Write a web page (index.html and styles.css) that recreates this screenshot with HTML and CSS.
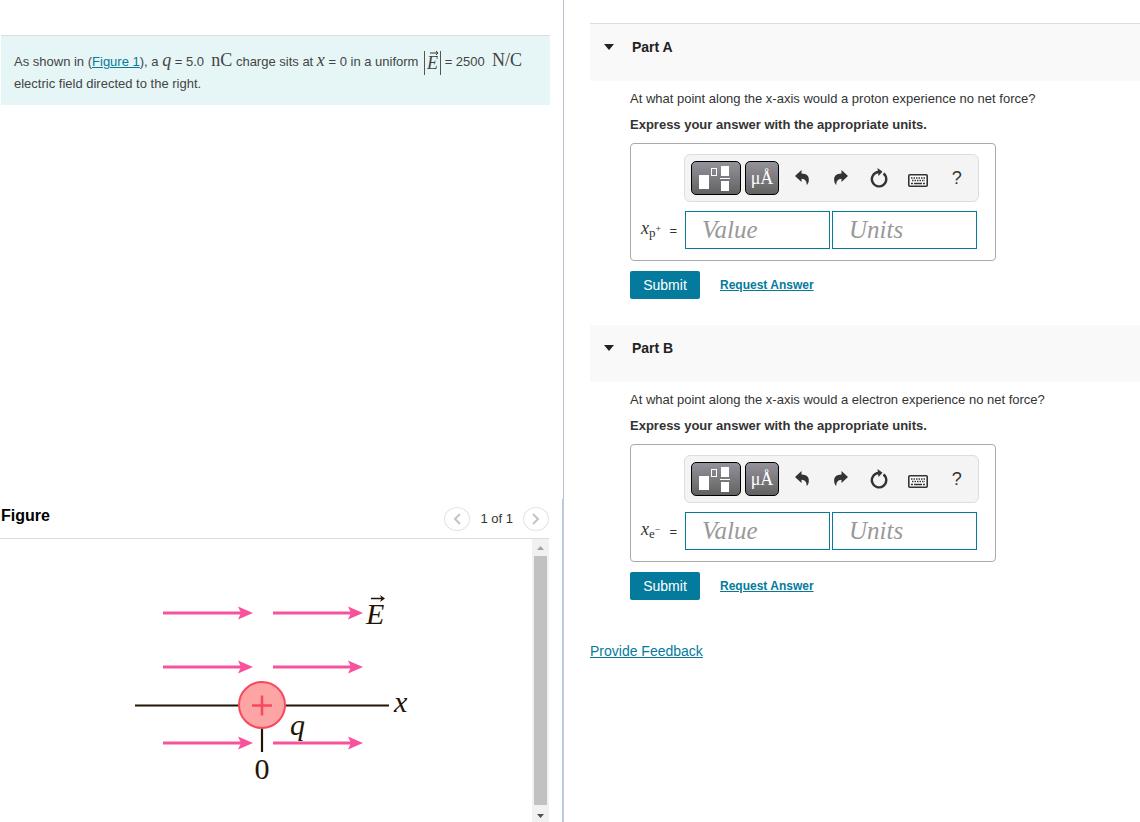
FILE: index.html
```html
<!DOCTYPE html>
<html lang="en">
<head>
    <meta charset="UTF-8">
    <title>Electric field problem</title>
    <link rel="stylesheet" href="styles.css">
</head>
<body>

    <!-- shared icons -->
    <svg class="sprite" aria-hidden="true">
        <symbol id="icon-template" viewBox="0 0 34 25">
            <rect x="0" y="9" width="10" height="14" fill="#fff"/>
            <rect x="12.500" y="2.500" width="5" height="7" fill="none" stroke="#fff"/>
            <rect x="22" y="0" width="8" height="10" fill="#fff"/>
            <rect x="21" y="12" width="10" height="1" fill="#fff"/>
            <rect x="22" y="15" width="8" height="10" fill="#fff"/>
        </symbol>
        <symbol id="icon-undo" viewBox="0 0 16 16">
            <path d="M1 6 7.500 0v3.500c5 .2 7.800 2.300 7.300 7-.1 1.700-.8 3.200-2 4.800C12.800 11.500 11.500 9 7.500 8.800V12z"/>
        </symbol>
        <symbol id="icon-redo" viewBox="0 0 16 16">
            <path d="M15 6 8.500 0v3.500c-5 .2-7.800 2.300-7.300 7 .1 1.700.8 3.200 2 4.800C3.200 11.500 4.500 9 8.500 8.800V12z"/>
        </symbol>
        <symbol id="icon-reset" viewBox="0 0 18 20">
            <path d="M13.500 5.500A7.200 7.200 0 1 1 8.500 4" fill="none" stroke="#333" stroke-width="2.400"/>
            <path d="M7.500 0l5 3.800L8.500 8z"/>
        </symbol>
        <symbol id="icon-keyboard" viewBox="0 0 20 13">
            <rect x=".8" y=".8" width="18.400" height="11.400" rx="1" fill="#fff" stroke="#333" stroke-width="1.600"/>
            <path d="M3 4h14M4 6.500h13" stroke="#333" stroke-width="1.500" stroke-dasharray="1.500 1"/>
            <path d="M3 9.500h2M6 9.500h8M15 9.500h2" stroke="#333" stroke-width="1.500"/>
        </symbol>
    </svg>

    <div class="page">
        <div class="left">
            <div class="problem">
                <div class="intro">
                    As shown in (<a href="#figure">Figure 1</a>), a <i class="math">q</i> = 5.0 &nbsp;<span class="math">nC</span> charge sits at <i class="math">x</i> = 0 in a uniform
                    <span class="abs"><i class="math">E</i><svg class="vec" viewBox="0 0 9 4"><path d="M0 2h8M6 0l2 2-2 2" fill="none" stroke="#333"/></svg></span> = 2500 &nbsp;<span class="math">N/C</span> electric field directed to the right.
                </div>
            </div>

            <div class="figure" id="figure">
                <div class="figure-header">
                    <h2>Figure</h2>
                    <div class="pager">
                        <button class="round" aria-label="Previous figure"><svg width="8" height="12" viewBox="0 0 8 12"><path d="M7 1 2 6l5 5"/></svg></button>
                        <span>1 of 1</span>
                        <button class="round" aria-label="Next figure"><svg width="8" height="12" viewBox="0 0 8 12"><path d="M1 1l5 5-5 5"/></svg></button>
                    </div>
                </div>
                <div class="viewer">
                    <div class="drawing">
                        <svg width="292" height="210" viewBox="0 0 292 210">
                            <defs>
                                <g id="field">
                                    <path d="M0 0h80" stroke="#f9529d" stroke-width="3"/>
                                    <path d="M90 0 75-6.500 78 0 75 6.500z" fill="#f9529d"/>
                                </g>
                            </defs>
                            <use href="#field" x="43" y="33"/>
                            <use href="#field" x="153" y="33"/>
                            <use href="#field" x="43" y="87"/>
                            <use href="#field" x="153" y="87"/>
                            <use href="#field" x="43" y="163"/>
                            <use href="#field" x="153" y="163"/>
                            <path d="M15 125.500h254M142 148v24" stroke="#231405" stroke-width="2.200"/>
                            <circle cx="142" cy="125" r="23" fill="#fda4a4" stroke="#f8485e" stroke-width="2"/>
                            <path d="M132 125.500h20M142 115.500v20" stroke="#f8485e" stroke-width="2.500"/>
                            <path d="M251 18.500h12" stroke="#231405" stroke-width="1.500"/>
                            <path d="M265 18.500l-5-3.500 1.500 3.500-1.500 3.500z" fill="#231405"/>
                            <text class="sym" x="246" y="44">E</text>
                            <text class="sym" x="274" y="132">x</text>
                            <text class="sym" x="170" y="155">q</text>
                            <text class="sym upright" x="142" y="199">0</text>
                        </svg>
                    </div>
                    <div class="scrollbar">
                        <svg width="7" height="4" viewBox="0 0 7 4"><path d="M0 4h7L3.500 0z" fill="#a3a3a3"/></svg>
                        <div class="thumb"></div>
                        <svg width="7" height="4" viewBox="0 0 7 4"><path d="M0 0h7L3.500 4z" fill="#505050"/></svg>
                    </div>
                </div>
            </div>
        </div>

        <div class="right">
            <div class="part first">
                <div class="part-header">
                    <svg width="10" height="6" viewBox="0 0 10 6"><path d="M0 0h10L5 6z" fill="#222"/></svg>
                    <h2>Part A</h2>
                </div>
                <div class="part-body">
                    <p>At what point along the x-axis would a proton experience no net force?</p>
                    <p class="strong">Express your answer with the appropriate units.</p>
                    <div class="answer">
                        <div class="toolbar">
                            <button class="dark wide" aria-label="Templates"><svg width="34" height="25"><use href="#icon-template"/></svg></button>
                            <button class="dark" aria-label="Units">μÅ</button>
                            <div class="tools">
                                <button aria-label="Undo"><svg width="16" height="16"><use href="#icon-undo"/></svg></button>
                                <button aria-label="Redo"><svg width="16" height="16"><use href="#icon-redo"/></svg></button>
                                <button aria-label="Reset"><svg width="18" height="20"><use href="#icon-reset"/></svg></button>
                                <button aria-label="Keyboard"><svg class="keyboard" width="20" height="13"><use href="#icon-keyboard"/></svg></button>
                                <button aria-label="Help">?</button>
                            </div>
                        </div>
                        <div class="fields">
                            <label for="value-a"><span><i class="math">x</i><span class="sub">p<sup>+</sup></span></span> <span>=</span></label>
                            <input type="text" id="value-a" placeholder="Value">
                            <input type="text" aria-label="Units" placeholder="Units">
                        </div>
                    </div>
                    <div class="actions">
                        <button class="submit">Submit</button>
                        <a href="#">Request Answer</a>
                    </div>
                </div>
            </div>

            <div class="part">
                <div class="part-header">
                    <svg width="10" height="6" viewBox="0 0 10 6"><path d="M0 0h10L5 6z" fill="#222"/></svg>
                    <h2>Part B</h2>
                </div>
                <div class="part-body">
                    <p>At what point along the x-axis would a electron experience no net force?</p>
                    <p class="strong">Express your answer with the appropriate units.</p>
                    <div class="answer">
                        <div class="toolbar">
                            <button class="dark wide" aria-label="Templates"><svg width="34" height="25"><use href="#icon-template"/></svg></button>
                            <button class="dark" aria-label="Units">μÅ</button>
                            <div class="tools">
                                <button aria-label="Undo"><svg width="16" height="16"><use href="#icon-undo"/></svg></button>
                                <button aria-label="Redo"><svg width="16" height="16"><use href="#icon-redo"/></svg></button>
                                <button aria-label="Reset"><svg width="18" height="20"><use href="#icon-reset"/></svg></button>
                                <button aria-label="Keyboard"><svg class="keyboard" width="20" height="13"><use href="#icon-keyboard"/></svg></button>
                                <button aria-label="Help">?</button>
                            </div>
                        </div>
                        <div class="fields">
                            <label for="value-b"><span><i class="math">x</i><span class="sub">e<sup>−</sup></span></span> <span>=</span></label>
                            <input type="text" id="value-b" placeholder="Value">
                            <input type="text" aria-label="Units" placeholder="Units">
                        </div>
                    </div>
                    <div class="actions">
                        <button class="submit">Submit</button>
                        <a href="#">Request Answer</a>
                    </div>
                </div>
            </div>

            <a class="feedback" href="#">Provide Feedback</a>
        </div>
    </div>

</body>
</html>
```
FILE: styles.css
```css
* {
    box-sizing: border-box;
}

body {
    margin: 0;
    font-family: "Liberation Sans", Arial, sans-serif;
    font-size: 13px;
    color: #333;
    background: #fff;
}

a {
    color: #047a9c;
}

h2, p {
    margin: 0;
}

button {
    font-family: inherit;
    padding: 0;
    border: 0;
    background: none;
    cursor: pointer;
}

.sprite {
    display: none;
}

.page {
    display: grid;
    grid-template-columns: 564fr 576fr;
    min-height: 100vh;
}

/* left column */
.left {
    display: flex;
    flex-direction: column;
}

.problem {
    flex: 1;
    padding: 35px 13px 0 1px;
    border-right: 1px solid #b9c0cc;
}

.intro {
    padding: 15px 12px 12px 13px;
    line-height: 18px;
    color: #444;
    background: #e6f6f6;
    border-top: 1px solid #ddd;
}

.math {
    font-family: "Liberation Serif", "Times New Roman", serif;
    font-size: 18px;
    line-height: 16px;
}

.abs {
    position: relative;
    display: inline-block;
    height: 24px;
    margin-left: 2px;
    padding: 0 2px;
    line-height: 28px;
    vertical-align: middle;
    border-left: 1px solid #555;
    border-right: 1px solid #555;
}

.vec {
    position: absolute;
    top: 0;
    left: 5px;
    width: 9px;
    height: 4px;
}

.figure {
    display: flex;
    flex-direction: column;
    height: 323px;
    padding-right: 13px;
    border-right: 2px solid #b8cbe0;
}

.figure-header {
    display: flex;
    align-items: center;
    justify-content: space-between;
    height: 40px;
    padding-left: 1px;
    border-bottom: 1px solid #ddd;
}

.figure-header h2 {
    padding-bottom: 6px;
    font-size: 16px;
    color: #000;
}

.pager {
    display: flex;
    align-items: center;
    gap: 10px;
}

.round {
    display: flex;
    align-items: center;
    justify-content: center;
    width: 26px;
    height: 24px;
    border: 1px solid #e3e3e3;
    border-radius: 50%;
}

.round path {
    fill: none;
    stroke: #c4c4c4;
    stroke-width: 2;
}

.viewer {
    display: flex;
    flex: 1;
}

.drawing {
    flex: 1;
    padding-top: 41px;
    text-align: center;
}

.sym {
    font-family: "Liberation Serif", "Times New Roman", serif;
    font-size: 30px;
    font-style: italic;
    fill: #231405;
}

.upright {
    font-style: normal;
    text-anchor: middle;
}

.scrollbar {
    display: flex;
    flex-direction: column;
    align-items: center;
    gap: 6px;
    width: 17px;
    padding: 7px 0 4px;
    background: #f1f1f1;
}

.thumb {
    flex: 1;
    width: 13px;
    margin-bottom: 3px;
    background: #c1c1c1;
}

/* right column */
.right {
    padding: 23px 0 0 26px;
}

.part-header {
    display: flex;
    align-items: flex-start;
    gap: 18px;
    height: 57px;
    padding: 15px 14px;
    background: #f9f9f9;
}

.first .part-header {
    height: 58px;
    border-top: 1px solid #ddd;
}

.part-header h2 {
    font-size: 14px;
    line-height: 16px;
    color: #222;
}

.part-header svg {
    margin-top: 5px;
}

.part-body {
    padding: 8px 0 26px 40px;
}

.part-body p {
    margin-bottom: 6px;
    line-height: 20px;
}

.part-body .strong {
    margin-bottom: 8px;
    font-weight: bold;
}

.answer {
    width: 366px;
    padding: 10px 16px 11px 10px;
    border: 1px solid #aaa;
    border-radius: 4px;
}

.toolbar {
    display: flex;
    align-items: center;
    gap: 4px;
    height: 48px;
    margin-left: 43px;
    padding: 0 2px 0 6px;
    background: #f4f4f4;
    border: 1px solid #ddd;
    border-radius: 6px;
}

.dark {
    display: flex;
    align-items: center;
    justify-content: center;
    width: 34px;
    height: 34px;
    font-family: "Liberation Serif", "Times New Roman", serif;
    font-size: 18px;
    color: #fff;
    background: linear-gradient(#94929a, #626262);
    border: 1px solid #000;
    border-radius: 5px;
}

.wide {
    width: 50px;
}

.tools {
    display: flex;
    flex: 1;
}

.tools button {
    display: flex;
    flex: 1;
    align-items: center;
    justify-content: center;
    height: 34px;
    font-size: 18px;
    color: #333;
}

.tools svg {
    fill: #333;
}

.tools .keyboard {
    margin-top: 4px;
}

.fields {
    display: flex;
    align-items: center;
    gap: 2px;
    margin-top: 9px;
}

.fields label {
    display: flex;
    align-items: center;
    justify-content: space-between;
    width: 42px;
    padding-right: 6px;
}

.sub {
    font-family: "Liberation Serif", "Times New Roman", serif;
    font-size: 13px;
    vertical-align: -3px;
}

.sub sup {
    font-size: 10px;
    line-height: 0;
}

.fields input {
    width: 145px;
    height: 38px;
    padding: 0 16px;
    font-family: "Liberation Serif", "Times New Roman", serif;
    font-size: 25px;
    border: 1px solid #047a9c;
}

.fields input::placeholder {
    font-style: italic;
    color: #999;
}

.actions {
    display: flex;
    align-items: center;
    gap: 20px;
    margin-top: 10px;
}

.actions a {
    font-size: 12px;
    font-weight: bold;
}

.submit {
    width: 70px;
    height: 28px;
    font-size: 14px;
    color: #fff;
    background: #047a9c;
    border-radius: 2px;
}

.feedback {
    display: inline-block;
    margin-top: 17px;
    font-size: 14px;
}
```
